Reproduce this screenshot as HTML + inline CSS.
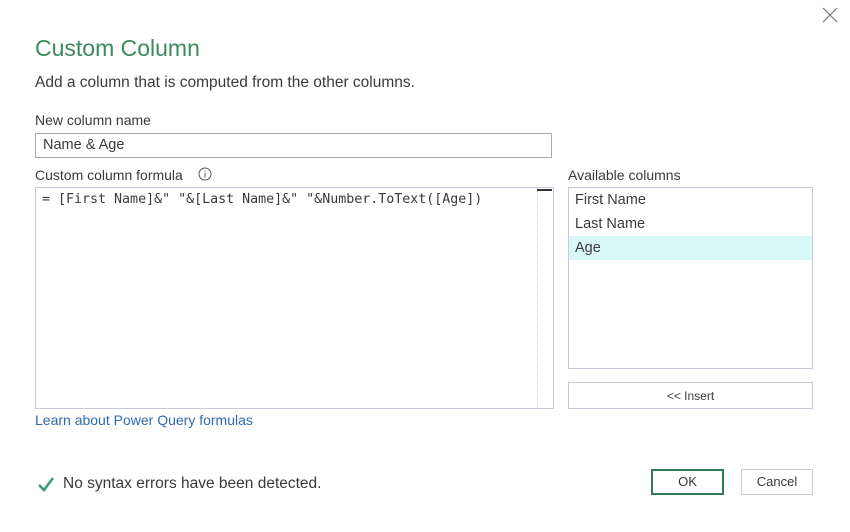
<!DOCTYPE html>
<html><head><style>
body{margin:0;width:850px;height:532px;background:#fff;font-family:"Liberation Sans",sans-serif;color:#3a3a3a;position:relative;overflow:hidden}
.a{position:absolute;white-space:nowrap}
.box{position:absolute;border:1px solid #c8c8d8;box-sizing:border-box;background:#fff}
</style></head><body>
<svg class="a" style="left:822px;top:7px" width="16" height="16"><path d="M1 1L15 15M15 1L1 15" stroke="#777" stroke-width="1.2"/></svg>
<div class="a" style="left:35px;top:35px;font-size:23px;color:#3b8a5c">Custom Column</div>
<div class="a" style="left:35px;top:74px;font-size:15.5px">Add a column that is computed from the other columns.</div>
<div class="a" style="left:35px;top:112px;font-size:14px">New column name</div>
<div class="box" style="left:35px;top:133px;width:517px;height:25px;border:1px solid #aaa"></div>
<div class="a" style="left:43px;top:137px;font-size:14.5px">Name &amp; Age</div>
<div class="a" style="left:35px;top:167px;font-size:14px">Custom column formula</div>
<svg class="a" style="left:198px;top:167px" width="14" height="14"><circle cx="7" cy="7" r="6" fill="none" stroke="#555"/><path d="M7 6v4.5M7 3.6v1.2" stroke="#555"/></svg>
<div class="box" style="left:35px;top:187px;width:519px;height:222px"></div>
<div class="a" style="left:537px;top:188px;width:1px;height:220px;border-left:1px dotted #ccc"></div>
<div class="a" style="left:537px;top:189px;width:15px;height:2px;background:#333"></div>
<div class="a" style="left:42px;top:192px;font-size:13.3px;font-family:'DejaVu Sans Mono','Liberation Mono',monospace">= [First Name]&amp;" "&amp;[Last Name]&amp;" "&amp;Number.ToText([Age])</div>
<div class="a" style="left:568px;top:167px;font-size:14px">Available columns</div>
<div class="box" style="left:568px;top:187px;width:245px;height:182px"></div>
<div class="a" style="left:569px;top:236px;width:243px;height:24px;background:#d8f8f8"></div>
<div class="a" style="left:575px;top:192px;font-size:14.5px">First Name</div>
<div class="a" style="left:575px;top:216px;font-size:14.5px">Last Name</div>
<div class="a" style="left:575px;top:240px;font-size:14.5px">Age</div>
<div class="box" style="left:568px;top:382px;width:245px;height:27px;text-align:center;font-size:12px;line-height:27px">&lt;&lt; Insert</div>
<div class="a" style="left:35px;top:412px;font-size:14px;color:#2e6aad">Learn about Power Query formulas</div>
<svg class="a" style="left:37px;top:475px" width="18" height="18"><path d="M2 10L7 15L16 3" fill="none" stroke="#3a9a80" stroke-width="2.6"/></svg>
<div class="a" style="left:63px;top:475px;font-size:15.5px">No syntax errors have been detected.</div>
<div class="box" style="left:651px;top:469px;width:73px;height:26px;border:2px solid #2f7d52;text-align:center;font-size:13px;line-height:22px">OK</div>
<div class="box" style="left:741px;top:469px;width:72px;height:26px;text-align:center;font-size:13px;line-height:24px">Cancel</div>
</body></html>
